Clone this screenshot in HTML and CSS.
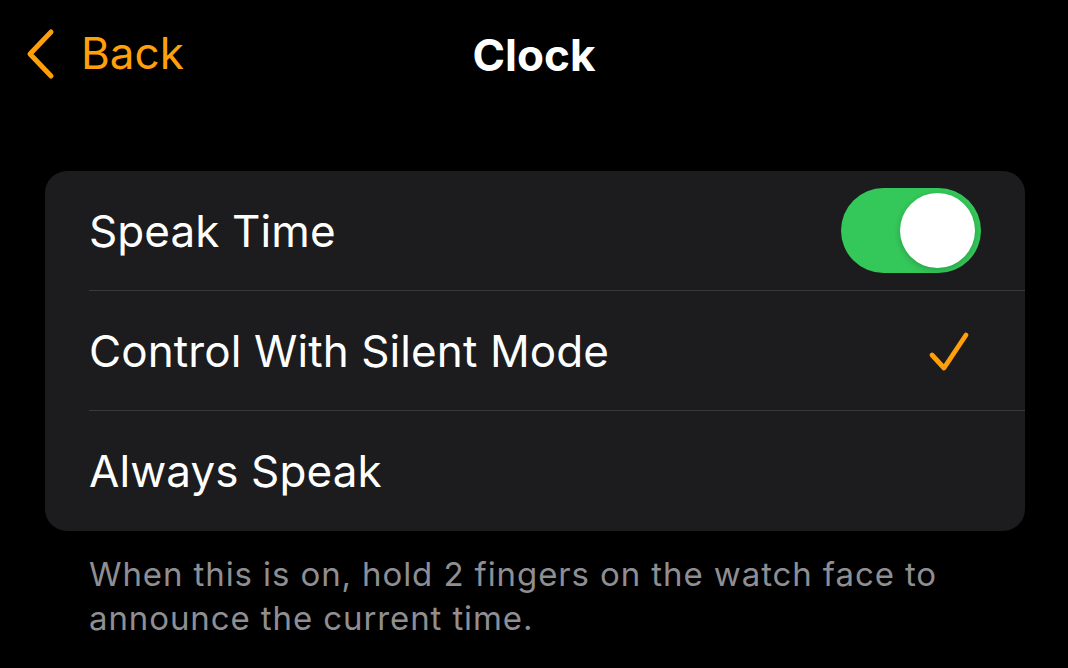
FILE: index.html
```html
<!doctype html>
<html lang="en">
  <head>
    <meta charset="UTF-8" />
    <meta name="viewport" content="width=device-width, initial-scale=1.0" />
    <title>Clock</title>
    <link rel="stylesheet" href="styles.css">
  </head>
  <body>
    <div class="screen">
      <div class="nav-bar">
        <button class="back-btn">
          <svg class="back-chevron" viewBox="0 0 32 52" width="32" height="52">
            <path d="M27 4 L6 26 L27 48" fill="none" stroke="#ff9f0a" stroke-width="5" stroke-linecap="round" stroke-linejoin="round" />
          </svg>
          <span>Back</span>
        </button>
        <div class="nav-title">Clock</div>
      </div>

      <div class="settings-group">
        <div class="settings-row">
          <div class="row-label">Speak Time</div>
          <div class="toggle on">
            <div class="toggle-knob"></div>
          </div>
        </div>
        <div class="settings-row">
          <div class="row-label">Control With Silent Mode</div>
          <svg class="check" viewBox="0 0 44 42" width="44" height="42">
            <path d="M5 25 L17 38 L39 5" fill="none" stroke="#ff9f0a" stroke-width="4.8" stroke-linecap="round" stroke-linejoin="round" />
          </svg>
        </div>
        <div class="settings-row">
          <div class="row-label">Always Speak</div>
        </div>
      </div>

      <p class="group-footer">
        When this is on, hold 2 fingers on the watch face to<br />announce the current time.
      </p>
    </div>
  </body>
</html>
```

FILE: styles.css
```css
* {
  margin: 0;
  padding: 0;
  box-sizing: border-box;
}

body {
  font-family: Inter, 'Noto Sans', sans-serif;
  background: #000;
  color: #fff;
  width: 1068px;
  height: 668px;
  overflow: hidden;
}

.screen {
  padding: 0 43px 0 45px;
}

.nav-bar {
  position: relative;
  height: 112px;
  display: flex;
  align-items: center;
  justify-content: center;
}

.back-btn {
  position: absolute;
  left: -21px;
  top: 28px;
  display: flex;
  align-items: center;
  gap: 25px;
  background: none;
  border: none;
  color: #ff9f0a;
  font-family: inherit;
  font-size: 44px;
}

.back-btn span {
  margin-top: -2px;
}

.nav-title {
  font-size: 44px;
  font-weight: 700;
  margin-left: -2px;
  margin-top: -3px;
}

.settings-group {
  margin-top: 59px;
  background: #1c1c1e;
  border-radius: 22px;
  overflow: hidden;
}

.settings-row {
  height: 120px;
  margin-left: 44px;
  padding-right: 44px;
  display: flex;
  align-items: center;
  justify-content: space-between;
  border-bottom: 1px solid #38383a;
}

.settings-row:last-child {
  border-bottom: none;
}

.row-label {
  font-size: 44px;
  letter-spacing: 0.1px;
}

.toggle {
  width: 140px;
  height: 85px;
  border-radius: 43px;
  background: #39393d;
  display: flex;
  align-items: center;
  padding: 0 6px;
}

.toggle.on {
  background: #34c759;
  justify-content: flex-end;
}

.toggle-knob {
  width: 75px;
  height: 75px;
  border-radius: 50%;
  background: #fff;
  box-shadow: 0 2px 6px rgba(0, 0, 0, 0.2);
}

.check {
  margin-right: 10px;
}

.group-footer {
  margin: 21px 0 0 44px;
  font-size: 33px;
  line-height: 44px;
  color: #8e8e93;
  letter-spacing: 0.9px;
}
```
